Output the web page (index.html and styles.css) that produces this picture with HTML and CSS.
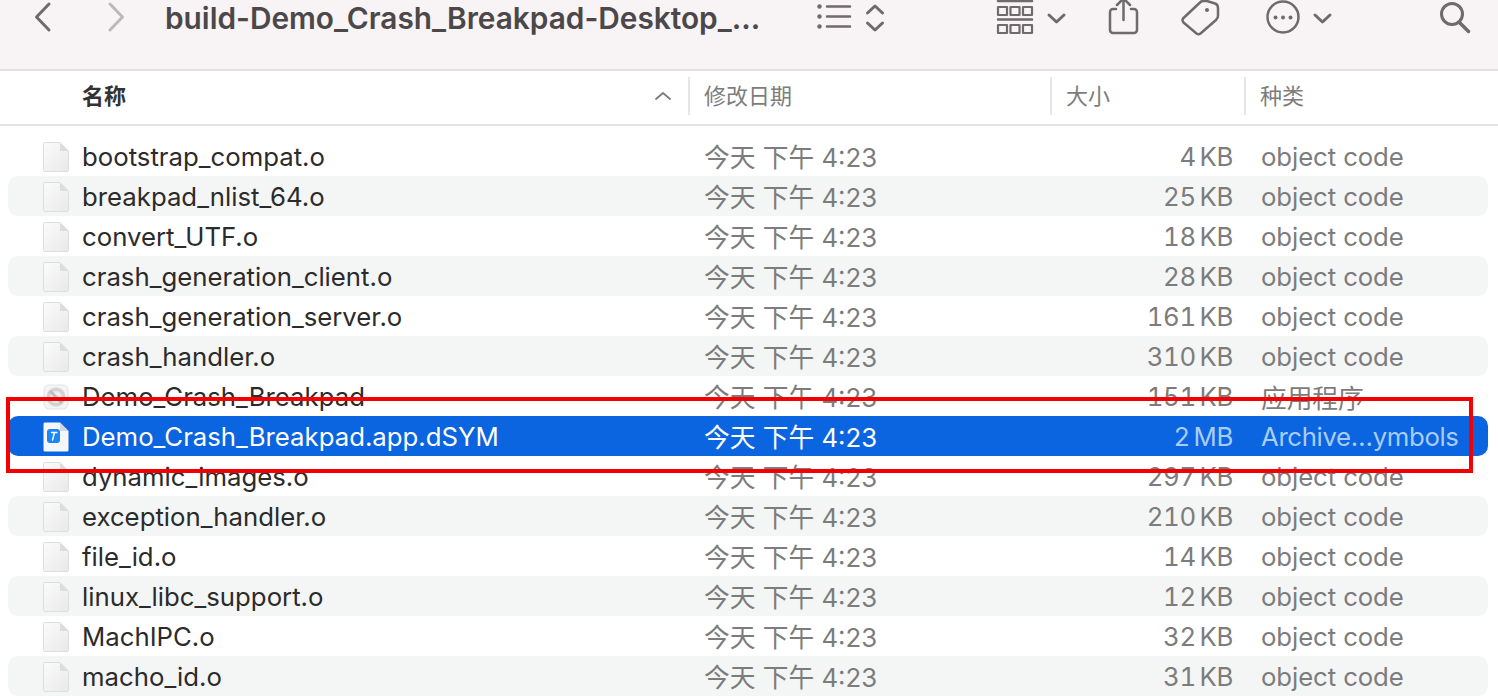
FILE: index.html
```html
<!DOCTYPE html>
<html lang="zh">
<head>
  <meta charset="UTF-8" />
  <title>build-Demo_Crash_Breakpad-Desktop</title>
  <link rel="stylesheet" href="styles.css">
</head>
<body>
  <svg class="defs" width="0" height="0">
    <defs>
      <linearGradient id="paper" x1="0" y1="0" x2="1" y2="1">
        <stop offset="0" stop-color="#fbfbfb" />
        <stop offset="1" stop-color="#e9e9e9" />
      </linearGradient>
      <symbol id="doc" viewBox="0 0 26 30">
        <path d="M1.500 0.500H17L25.500 9V28a1.500 1.500 0 0 1-1.500 1.500H2A1.500 1.500 0 0 1 0.500 28V2A1.500 1.500 0 0 1 1.500 0.500Z" fill="url(#paper)" stroke="#dedede" />
        <path d="M17 0.500V9H25.500Z" fill="#dcdcdc" />
      </symbol>
    </defs>
  </svg>

  <header class="toolbar">
    <div class="nav">
      <svg width="18" height="34" viewBox="0 0 18 34"><path d="M15 4 2.500 17 15 30" fill="none" stroke="#6f6a6c" stroke-width="3" stroke-linecap="round" stroke-linejoin="round" /></svg>
      <svg width="18" height="34" viewBox="0 0 18 34"><path d="M3 4l12.500 13L3 30" fill="none" stroke="#bdb9bb" stroke-width="3" stroke-linecap="round" stroke-linejoin="round" /></svg>
    </div>
    <div class="title">build-Demo_Crash_Breakpad-Desktop_...</div>
    <div class="tools">
      <svg class="tool-list" width="66" height="36" viewBox="0 0 66 36" fill="none" stroke="#6f6a6c" stroke-linecap="round" stroke-linejoin="round">
        <path d="M10 6.500h23M10 16.500h23M10 26.500h23" stroke-width="2.500" />
        <circle cx="2.500" cy="6.500" r="2.200" fill="#6f6a6c" stroke="none" />
        <circle cx="2.500" cy="16.500" r="2.200" fill="#6f6a6c" stroke="none" />
        <circle cx="2.500" cy="26.500" r="2.200" fill="#6f6a6c" stroke="none" />
        <path d="m50.500 13 7.500-7 7.500 7M50.500 23l7.500 7 7.500-7" stroke-width="3" />
      </svg>
      <svg class="tool-view" width="68" height="36" viewBox="0 0 68 36" fill="none" stroke="#6f6a6c" stroke-linecap="round" stroke-linejoin="round">
        <path d="M1 1h34M1 19.500h34" stroke-width="2.500" />
        <path d="M1 7h9v8H1zM13.500 7h9v8h-9zM26 7h9v8h-9zM1 25h9v8H1zM13.500 25h9v8h-9zM26 25h9v8h-9z" stroke-width="2.200" />
        <path d="m52 15 7.500 7 7.500-7" stroke-width="3" />
      </svg>
      <svg class="tool-share" width="32" height="36" viewBox="0 0 32 36" fill="none" stroke="#6f6a6c" stroke-width="2.500" stroke-linecap="round" stroke-linejoin="round">
        <path d="M8 9H5a3 3 0 0 0-3 3v18a3 3 0 0 0 3 3h21a3 3 0 0 0 3-3V12a3 3 0 0 0-3-3h-3" />
        <path d="M15.500 20V0M9 5l6.500-6.500L22 5" />
      </svg>
      <svg class="tool-tag" width="38" height="36" viewBox="0 0 38 36" fill="none" stroke="#6f6a6c" stroke-width="2.500" stroke-linecap="round" stroke-linejoin="round">
        <path d="M2.500 18 19 2.500Q20.500 1 22.500 1H26l8 2.500Q37 4.500 37 8v8q0 2-2 4L19.500 33.500q-2 1.500-4 0L2.500 22.500q-2-2.500 0-4.500Z" />
        <circle cx="26" cy="10" r="2" fill="#6f6a6c" stroke="none" />
      </svg>
      <svg class="tool-more" width="65" height="36" viewBox="0 0 65 36" fill="none" stroke="#6f6a6c" stroke-linecap="round" stroke-linejoin="round">
        <circle cx="17" cy="17" r="15.500" stroke-width="2.500" />
        <circle cx="9.500" cy="17.500" r="2" fill="#6f6a6c" stroke="none" />
        <circle cx="17" cy="17.500" r="2" fill="#6f6a6c" stroke="none" />
        <circle cx="24.500" cy="17.500" r="2" fill="#6f6a6c" stroke="none" />
        <path d="m49 15 7.500 7 7.500-7" stroke-width="3" />
      </svg>
      <svg class="tool-search" width="30" height="36" viewBox="0 0 30 36" fill="none" stroke="#6f6a6c" stroke-linecap="round">
        <circle cx="12" cy="14" r="10.500" stroke-width="3" />
        <path d="m20 23 8.500 8.500" stroke-width="3.500" />
      </svg>
    </div>
  </header>

  <div class="col-head">
    <div class="col col-name"><span>名称</span>
      <svg width="16" height="10" viewBox="0 0 16 10"><path d="m1 8 7-6 7 6" fill="none" stroke="#7b7b7b" stroke-width="1.800" stroke-linecap="round" stroke-linejoin="round" /></svg>
    </div>
    <div class="col">修改日期</div>
    <div class="col">大小</div>
    <div class="col">种类</div>
  </div>

  <main class="rows">
    <div class="row"><svg class="icon"><use href="#doc" /></svg><span class="name">bootstrap_compat.o</span><span class="date">今天 下午 4:23</span><span class="size">4 KB</span><span class="kind">object code</span></div>
    <div class="row"><svg class="icon"><use href="#doc" /></svg><span class="name">breakpad_nlist_64.o</span><span class="date">今天 下午 4:23</span><span class="size">25 KB</span><span class="kind">object code</span></div>
    <div class="row"><svg class="icon"><use href="#doc" /></svg><span class="name">convert_UTF.o</span><span class="date">今天 下午 4:23</span><span class="size">18 KB</span><span class="kind">object code</span></div>
    <div class="row"><svg class="icon"><use href="#doc" /></svg><span class="name">crash_generation_client.o</span><span class="date">今天 下午 4:23</span><span class="size">28 KB</span><span class="kind">object code</span></div>
    <div class="row"><svg class="icon"><use href="#doc" /></svg><span class="name">crash_generation_server.o</span><span class="date">今天 下午 4:23</span><span class="size">161 KB</span><span class="kind">object code</span></div>
    <div class="row"><svg class="icon"><use href="#doc" /></svg><span class="name">crash_handler.o</span><span class="date">今天 下午 4:23</span><span class="size">310 KB</span><span class="kind">object code</span></div>
    <div class="row">
      <svg class="icon" viewBox="0 0 26 30"><rect x="1" y="3" width="24" height="24" rx="5" fill="#f4f4f4" stroke="#e4e4e4" /><circle cx="13" cy="15" r="9.500" fill="#d2d2d2" /><circle cx="13" cy="15" r="6" fill="#ececec" /><path d="m7 9 12 12" stroke="#bdbdbd" stroke-width="3" /></svg>
      <span class="name">Demo_Crash_Breakpad</span><span class="date">今天 下午 4:23</span><span class="size">151 KB</span><span class="kind">应用程序</span>
    </div>
    <div class="row selected">
      <svg class="icon" viewBox="0 0 26 30"><path d="M1.500 0.500H17L25.500 9V28a1.500 1.500 0 0 1-1.500 1.500H2A1.500 1.500 0 0 1 0.500 28V2A1.500 1.500 0 0 1 1.500 0.500Z" fill="#f4f6f9" /><path d="M17 0.500V9H25.500Z" fill="#cfd6e0" /><rect x="4" y="7" width="13" height="14" rx="3" fill="#1b87f5" /><path d="M8.500 10.500h5.500M11.500 10.500l-2 7.500" stroke="#fff" stroke-width="1.400" stroke-linecap="round" /></svg>
      <span class="name">Demo_Crash_Breakpad.app.dSYM</span><span class="date">今天 下午 4:23</span><span class="size">2 MB</span><span class="kind">Archive…ymbols</span>
    </div>
    <div class="row"><svg class="icon"><use href="#doc" /></svg><span class="name">dynamic_images.o</span><span class="date">今天 下午 4:23</span><span class="size">297 KB</span><span class="kind">object code</span></div>
    <div class="row"><svg class="icon"><use href="#doc" /></svg><span class="name">exception_handler.o</span><span class="date">今天 下午 4:23</span><span class="size">210 KB</span><span class="kind">object code</span></div>
    <div class="row"><svg class="icon"><use href="#doc" /></svg><span class="name">file_id.o</span><span class="date">今天 下午 4:23</span><span class="size">14 KB</span><span class="kind">object code</span></div>
    <div class="row"><svg class="icon"><use href="#doc" /></svg><span class="name">linux_libc_support.o</span><span class="date">今天 下午 4:23</span><span class="size">12 KB</span><span class="kind">object code</span></div>
    <div class="row"><svg class="icon"><use href="#doc" /></svg><span class="name">MachIPC.o</span><span class="date">今天 下午 4:23</span><span class="size">32 KB</span><span class="kind">object code</span></div>
    <div class="row"><svg class="icon"><use href="#doc" /></svg><span class="name">macho_id.o</span><span class="date">今天 下午 4:23</span><span class="size">31 KB</span><span class="kind">object code</span></div>
  </main>

  <div class="highlight"></div>
</body>
</html>
```

FILE: styles.css
```css
* {
  box-sizing: border-box;
}

html, body {
  height: 100%;
}

body {
  margin: 0;
  position: relative;
  overflow: hidden;
  background: #fff;
  color: #2b2b2b;
  font-family: Inter, "Noto Sans CJK SC", sans-serif;
  font-size: 25.75px;
}

.defs {
  position: absolute;
}

svg {
  display: block;
  flex-shrink: 0;
  overflow: visible;
}

/* toolbar */
.toolbar {
  display: flex;
  align-items: flex-start;
  height: 71px;
  padding-left: 34px;
  background: #f8f3f5;
  border-bottom: 2px solid #e3dfe0;
}

.nav {
  display: flex;
  gap: 55px;
}

.title {
  width: 652px;
  margin-left: 40px;
  font-size: 29.8px;
  font-weight: 600;
  line-height: 36px;
  color: #4c4849;
  white-space: nowrap;
}

.tools {
  display: flex;
  align-items: flex-start;
}

.tool-view {
  margin-left: 114px;
}

.tool-share {
  margin-left: 43px;
}

.tool-tag {
  margin-left: 41px;
}

.tool-more {
  margin-left: 47px;
}

.tool-search {
  margin-left: 109px;
}

/* column headers */
.col-head {
  display: grid;
  grid-template-columns: 688px 362px 194px 1fr;
  align-items: center;
  height: 55px;
  padding-bottom: 3px;
  border-bottom: 2px solid #e4e4e4;
  font-size: 22px;
  color: #7d7d7d;
}

.col {
  height: 38px;
  line-height: 38px;
  padding-left: 14px;
  border-left: 2px solid #e6e6e6;
}

.col-name {
  display: flex;
  justify-content: space-between;
  align-items: center;
  padding: 0 17px 0 82px;
  border-left: none;
  font-weight: 600;
  color: #333;
}

/* file rows */
.rows {
  padding: 10px 10px 0 8px;
}

.row {
  display: grid;
  grid-template-columns: 682px 330px 213px 1fr;
  align-items: center;
  position: relative;
  height: 40px;
  border-radius: 10px;
  white-space: nowrap;
}

.row:nth-child(even) {
  background: #f4f5f5;
}

.icon {
  position: absolute;
  left: 35px;
  top: 6px;
  width: 26px;
  height: 30px;
}

.name {
  padding-left: 74px;
  color: #2b2b2b;
}

.date {
  margin-bottom: 2px;
  padding-left: 14px;
  color: #7c7c7c;
}

.size {
  text-align: right;
  word-spacing: -3px;
  letter-spacing: -0.3px;
  font-variant-numeric: tabular-nums;
  color: #7c7c7c;
}

.kind {
  padding-left: 28px;
  letter-spacing: -0.1px;
  color: #7c7c7c;
}

.row.selected {
  background: #0b64e0;
}

.row.selected .name,
.row.selected .date {
  color: #fff;
}

.row.selected .size,
.row.selected .kind {
  color: #a9cdfb;
}

.row.selected .kind {
  letter-spacing: -0.35px;
}

/* red annotation box */
.highlight {
  position: absolute;
  left: 6px;
  top: 397px;
  width: 1467px;
  height: 76px;
  border: 4px solid #f40000;
}
```
